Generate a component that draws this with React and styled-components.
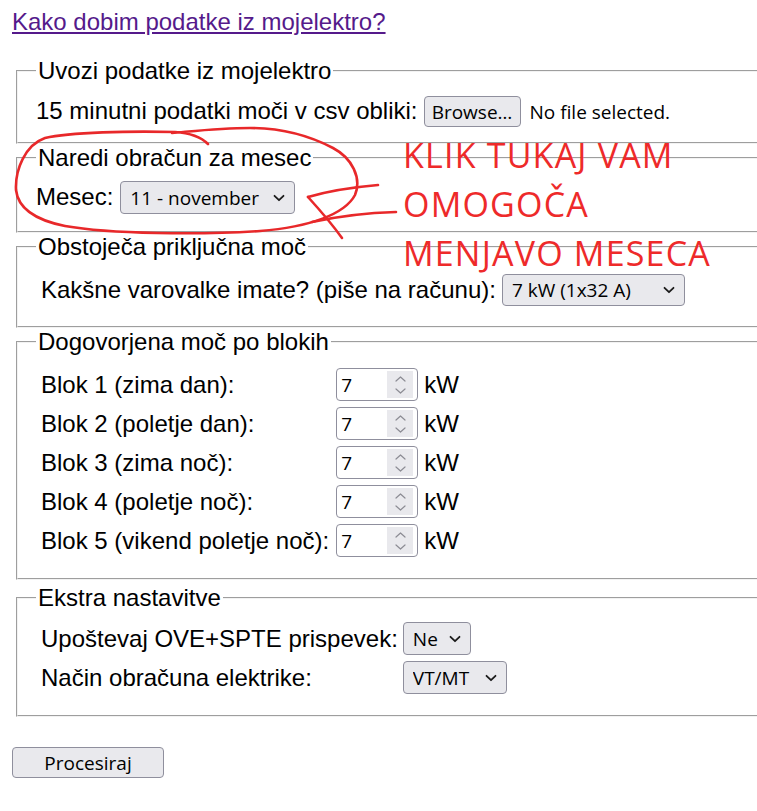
import React from "react";
import styled, { createGlobalStyle } from "styled-components";

const GlobalStyle = createGlobalStyle`
  html, body {
    margin: 0;
    padding: 0;
    overflow: hidden;
    background: #ffffff;
  }
  body {
    font-family: "Liberation Sans", Arial, sans-serif;
    font-size: 24px;
    color: #000;
  }
`;

const Page = styled.div`
  position: relative;
  width: 757px;
  height: 811px;
  overflow: hidden;
  padding: 8px 0 0 12px;
  box-sizing: border-box;
`;

const HelpLink = styled.a`
  display: block;
  width: max-content;
  color: #551a8b;
  text-decoration: underline;
  margin-bottom: 21px;
  cursor: pointer;
`;

const Fieldset = styled.fieldset`
  box-sizing: border-box;
  width: 900px;
  margin: ${(p) => p.$mt || 0}px 0 0 4px;
  padding: 8px 18px ${(p) => p.$padBottom ?? 15}px 18px;
  border: 2px groove #f2f2f2;
  min-width: 0;
`;

const Legend = styled.legend`
  padding: 0 2px;
  font-size: 24px;
`;

const Row = styled.div`
  display: flex;
  align-items: baseline;
  padding-top: ${(p) => p.$padTop || 0}px;
  white-space: nowrap;
`;

const RowText = styled.span`
  margin-right: ${(p) => p.$gap || 6}px;
`;

const FormGrid = styled.div`
  display: grid;
  grid-template-columns: auto auto;
  grid-auto-rows: 35px;
  row-gap: 4px;
  column-gap: ${(p) => p.$gap}px;
  align-items: center;
  justify-content: start;
  padding: ${(p) => p.$padTop ?? 3}px 3px 3px 5px;
  white-space: nowrap;
`;

const FieldLabel = styled.span`
  display: block;
`;

const controlFont = `"Open Sans", "DejaVu Sans", sans-serif`;

const SelectWrap = styled.span`
  position: relative;
  display: inline-block;
  width: ${(p) => p.$w}px;
  height: ${(p) => p.$h || 33}px;
`;

const Select = styled.select`
  appearance: none;
  -webkit-appearance: none;
  box-sizing: border-box;
  width: 100%;
  height: 100%;
  margin: 0;
  padding: 0 30px 0 9px;
  font-family: ${controlFont};
  font-size: 19px;
  color: #000;
  background: #e9e9ed;
  border: 1px solid #8f8f9d;
  border-radius: 4px;
  outline: none;
`;

const Chevron = styled.svg`
  position: absolute;
  right: 10px;
  top: 50%;
  width: 12px;
  height: 8px;
  margin-top: -4px;
  pointer-events: none;
`;

function DropDown({ w, h, value, options }) {
  return (
    <SelectWrap $w={w} $h={h}>
      <Select defaultValue={value}>
        {options.map((o) => (
          <option key={o} value={o}>
            {o}
          </option>
        ))}
      </Select>
      <Chevron viewBox="0 0 12 8">
        <path d="M1.5 1.8 L6 6.2 L10.5 1.8" fill="none" stroke="#1b1b1b" strokeWidth="1.8" strokeLinecap="round" strokeLinejoin="round" />
      </Chevron>
    </SelectWrap>
  );
}

const NumberBox = styled.span`
  box-sizing: border-box;
  display: flex;
  align-items: center;
  width: 82px;
  height: 33px;
  padding: 0 4px 0 4px;
  background: #fff;
  border: 1px solid #8f8f9d;
  border-radius: 4px;
`;

const NumberInput = styled.input`
  width: 40px;
  border: none;
  outline: none;
  padding: 0;
  margin: 0;
  background: transparent;
  font-family: ${controlFont};
  font-size: 19px;
  color: #000;
`;

const Spinner = styled.span`
  margin-left: auto;
  width: 26px;
  height: 27px;
  background: #e9e9ed;
  display: flex;
  flex-direction: column;
  align-items: center;
  justify-content: center;
  gap: 6px;
`;

const SpinArrow = styled.svg`
  width: 11px;
  height: 6px;
  display: block;
`;

function NumberField({ value }) {
  return (
    <NumberBox>
      <NumberInput type="text" defaultValue={value} />
      <Spinner>
        <SpinArrow viewBox="0 0 11 6">
          <path d="M1 5 L5.5 1 L10 5" fill="none" stroke="#8c8c94" strokeWidth="1.2" strokeLinecap="round" strokeLinejoin="round" />
        </SpinArrow>
        <SpinArrow viewBox="0 0 11 6">
          <path d="M1 1 L5.5 5 L10 1" fill="none" stroke="#8c8c94" strokeWidth="1.2" strokeLinecap="round" strokeLinejoin="round" />
        </SpinArrow>
      </Spinner>
    </NumberBox>
  );
}

const UnitRow = styled.span`
  display: flex;
  align-items: center;
  gap: 6px;
`;

const FileButton = styled.button`
  box-sizing: border-box;
  height: 31px;
  width: 97px;
  padding: 0;
  margin: 0;
  font-family: ${controlFont};
  font-size: 19px;
  color: #000;
  background: #e9e9ed;
  border: 1px solid #8f8f9d;
  border-radius: 4px;
`;

const FileName = styled.span`
  font-family: ${controlFont};
  font-size: 19px;
  margin-left: 9px;
`;

const SubmitButton = styled.button`
  box-sizing: border-box;
  display: block;
  width: 152px;
  height: 31px;
  margin: 30px 0 0 0;
  padding: 0;
  font-family: ${controlFont};
  font-size: 19px;
  color: #000;
  background: #e9e9ed;
  border: 1px solid #8f8f9d;
  border-radius: 4px;
`;

const Scribble = styled.svg`
  position: absolute;
  left: 0;
  top: 0;
  width: 757px;
  height: 811px;
  pointer-events: none;
`;

const Note = styled.div`
  position: absolute;
  left: 403px;
  top: 131px;
  font-family: "Open Sans", "Lato", sans-serif;
  font-size: 34px;
  line-height: 49px;
  letter-spacing: 1.2px;
  color: #ee2a2a;
  white-space: nowrap;
  pointer-events: none;
`;

const months = [
  "1 - januar", "2 - februar", "3 - marec", "4 - april", "5 - maj", "6 - junij",
  "7 - julij", "8 - avgust", "9 - september", "10 - oktober", "11 - november", "12 - december",
];

const blocks = [
  "Blok 1 (zima dan):",
  "Blok 2 (poletje dan):",
  "Blok 3 (zima noč):",
  "Blok 4 (poletje noč):",
  "Blok 5 (vikend poletje noč):",
];

export default function App() {
  return (
    <>
      <GlobalStyle />
      <Page>
        <HelpLink>Kako dobim podatke iz mojelektro?</HelpLink>

        <Fieldset>
          <Legend>Uvozi podatke iz mojelektro</Legend>
          <Row $padTop={3}>
            <RowText $gap={6}>15 minutni podatki moči v csv obliki:</RowText>
            <FileButton type="button">Browse…</FileButton>
            <FileName>No file selected.</FileName>
          </Row>
        </Fieldset>

        <Fieldset $padBottom={17}>
          <Legend>Naredi obračun za mesec</Legend>
          <Row $padTop={1}>
            <RowText $gap={7}>Mesec:</RowText>
            <DropDown w={175} value="11 - november" options={months} />
          </Row>
        </Fieldset>

        <Fieldset $padBottom={16}>
          <Legend>Obstoječa priključna moč</Legend>
          <FormGrid $gap={6}>
            <FieldLabel>Kakšne varovalke imate? (piše na računu):</FieldLabel>
            <DropDown w={183} h={32} value="7 kW (1x32 A)" options={["3 kW (1x16 A)", "7 kW (1x32 A)", "11 kW (3x16 A)", "14 kW (3x20 A)", "17 kW (3x25 A)", "22 kW (3x32 A)"]} />
          </FormGrid>
        </Fieldset>

        <Fieldset $padBottom={17}>
          <Legend>Dogovorjena moč po blokih</Legend>
          <FormGrid $gap={7} $padTop={3}>
            {blocks.map((b) => (
              <React.Fragment key={b}>
                <FieldLabel>{b}</FieldLabel>
                <UnitRow>
                  <NumberField value="7" />
                  kW
                </UnitRow>
              </React.Fragment>
            ))}
          </FormGrid>
        </Fieldset>

        <Fieldset $mt={4} $padBottom={17}>
          <Legend>Ekstra nastavitve</Legend>
          <FormGrid $gap={5} $padTop={1}>
            <FieldLabel>Upoštevaj OVE+SPTE prispevek:</FieldLabel>
            <DropDown w={68} value="Ne" options={["Ne", "Da"]} />
            <FieldLabel>Način obračuna elektrike:</FieldLabel>
            <DropDown w={104} value="VT/MT" options={["VT/MT", "ET"]} />
          </FormGrid>
        </Fieldset>

        <SubmitButton type="button">Procesiraj</SubmitButton>

        <Scribble viewBox="0 0 757 811">
          <g fill="none" stroke="#e8282a" strokeWidth="2.6" strokeLinecap="round" strokeLinejoin="round">
            <path d="M208 144 C200 136 190 133 175 132 C130 131 70 132 45 138 C25 145 15 170 16 190 C18 208 35 220 65 226 C110 234 200 235 260 231 C310 227 345 214 355 195 C362 178 352 158 333 148 C310 136 280 128 250 128 C220 128 195 131 172 133" />
            <path d="M378 185 C355 187 325 192 308 197" />
            <path d="M308 197 C318 208 332 224 342 238" />
            <path d="M312 222 C335 217 360 213 396 212" />
          </g>
        </Scribble>
        <Note>
          KLIK TUKAJ VAM
          <br />
          OMOGOČA
          <br />
          MENJAVO MESECA
        </Note>
      </Page>
    </>
  );
}
